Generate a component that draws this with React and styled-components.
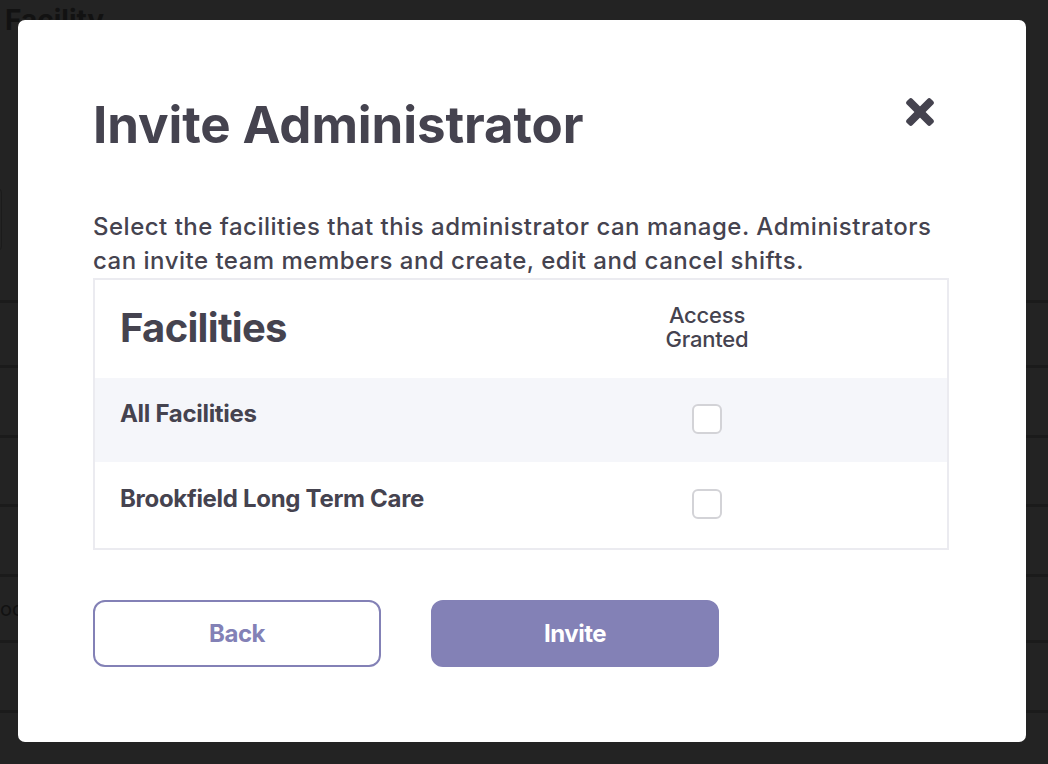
import React, { useState } from 'react'
import styled, { createGlobalStyle } from 'styled-components'

const GlobalStyle = createGlobalStyle`
  html, body {
    margin: 0;
    padding: 0;
    height: 100%;
  }
  body {
    font-family: Inter, "Noto Sans", sans-serif;
    background: #232323;
    overflow: hidden;
  }
`

// Page behind the overlay
const Backdrop = styled.div`
  width: 1048px;
  height: 764px;
  background: #232323;
  display: flex;
  flex-direction: column;
  overflow: hidden;
`

const PageTitle = styled.div`
  margin: 0 0 0 5px;
  font-size: 28px;
  font-weight: 700;
  line-height: 40px;
  color: #121212;
`

const PageInput = styled.div`
  margin: 147px 0 0 -200px;
  width: 200px;
  height: 63px;
  border: 1px solid #1b1b1b;
  border-radius: 6px;
`

const PageRows = styled.div`
  margin-top: 48px;
  display: flex;
  flex-direction: column;
`

const PageRow = styled.div`
  height: ${props => props.h}px;
  border-bottom: 3px solid #1b1b1b;
  display: flex;
  align-items: center;
  font-size: 20px;
  color: #121212;
`

// Overlay & modal
const Overlay = styled.div`
  position: fixed;
  inset: 0;
  display: flex;
  align-items: flex-start;
  justify-content: flex-start;
  padding: 20px 0 0 18px;
`

const Modal = styled.div`
  width: 1008px;
  height: 722px;
  box-sizing: border-box;
  background: #ffffff;
  border-radius: 7px;
  padding: 75px 77px 75px 75px;
  display: flex;
  flex-direction: column;
  color: #45434f;
`

const Header = styled.div`
  display: flex;
  justify-content: space-between;
  align-items: flex-start;
`

const Title = styled.h1`
  margin: 0;
  font-size: 51px;
  line-height: 60px;
  font-weight: 700;
  letter-spacing: -0.1px;
`

const CloseButton = styled.button`
  border: none;
  background: none;
  padding: 0;
  margin: 2px 15px 0 0;
  cursor: pointer;
  width: 28px;
  height: 30px;
  display: flex;
  align-items: center;
  justify-content: center;
`

const Description = styled.p`
  margin: 55px 0 0 0;
  font-size: 24px;
  line-height: 34px;
  font-weight: 500;
  letter-spacing: 0.5px;
`

// Table
const Table = styled.div`
  border: 2px solid #ebebf0;
  display: flex;
  flex-direction: column;
`

const Row = styled.div`
  display: grid;
  grid-template-columns: 532px 160px 1fr;
  align-items: center;
  height: ${props => props.h}px;
  box-sizing: border-box;
  padding-bottom: ${props => props.lift || 0}px;
  background: ${props => props.shaded ? '#f5f6fa' : '#ffffff'};
`

const HeadCell = styled.div`
  padding-left: 25px;
  font-size: 40px;
  font-weight: 700;
  letter-spacing: -0.7px;
`

const AccessHead = styled.div`
  text-align: center;
  font-size: 22px;
  line-height: 24px;
  font-weight: 500;
  letter-spacing: -0.2px;
`

const NameCell = styled.div`
  padding-left: 25px;
  padding-bottom: 10px;
  font-size: 24px;
  font-weight: 700;
  letter-spacing: -0.3px;
`

const CheckCell = styled.div`
  display: flex;
  justify-content: center;
`

const Checkbox = styled.button`
  width: 30px;
  height: 30px;
  box-sizing: border-box;
  border: 2px solid #d3d3d7;
  border-radius: 6px;
  background: ${props => props.checked ? '#8381b6' : '#ffffff'};
  padding: 0;
  cursor: pointer;
`

// Buttons
const Actions = styled.div`
  margin-top: 50px;
  display: flex;
  gap: 50px;
`

const ActionButton = styled.button`
  width: 288px;
  height: 67px;
  box-sizing: border-box;
  border-radius: 12px;
  font-family: inherit;
  font-size: 24px;
  font-weight: 700;
  letter-spacing: -0.5px;
  cursor: pointer;
  border: 2px solid #8381b6;
  background: ${props => props.primary ? '#8381b6' : '#ffffff'};
  color: ${props => props.primary ? '#ffffff' : '#8381b6'};
`

const CloseIcon = () => (
  <svg width="28" height="28" viewBox="0 0 28 28">
    <g fill="#45434f" transform="rotate(45 14 14)">
      <rect x="10" y="-3" width="8" height="34" rx="2.5" />
      <rect x="-3" y="10" width="34" height="8" rx="2.5" />
    </g>
  </svg>
)

const facilities = ['All Facilities', 'Brookfield Long Term Care']

const App = () => {
  const [checked, setChecked] = useState([false, false])

  const toggle = (i) => setChecked(checked.map((c, j) => j === i ? !c : c))

  return (
    <>
      <GlobalStyle />
      <Backdrop>
        <PageTitle>Facility</PageTitle>
        <PageInput />
        <PageRows>
          <PageRow h={0} />
          <PageRow h={62} />
          <PageRow h={67} />
          <PageRow h={66} />
          <PageRow h={67} />
          <PageRow h={63}>oo</PageRow>
          <PageRow h={67} />
        </PageRows>
      </Backdrop>

      <Overlay>
        <Modal>
          <Header>
            <Title>Invite Administrator</Title>
            <CloseButton aria-label="Close"><CloseIcon /></CloseButton>
          </Header>

          <Description>
            Select the facilities that this administrator can manage. Administrators
            can invite team members and create, edit and cancel shifts.
          </Description>

          <Table>
            <Row h={98} lift={4}>
              <HeadCell>Facilities</HeadCell>
              <AccessHead>Access<br />Granted</AccessHead>
            </Row>
            {facilities.map((name, i) => (
              <Row key={name} h={i === 0 ? 84 : 86} lift={3} shaded={i === 0}>
                <NameCell>{name}</NameCell>
                <CheckCell>
                  <Checkbox checked={checked[i]} onClick={() => toggle(i)} />
                </CheckCell>
              </Row>
            ))}
          </Table>

          <Actions>
            <ActionButton>Back</ActionButton>
            <ActionButton primary>Invite</ActionButton>
          </Actions>
        </Modal>
      </Overlay>
    </>
  )
}

export default App
